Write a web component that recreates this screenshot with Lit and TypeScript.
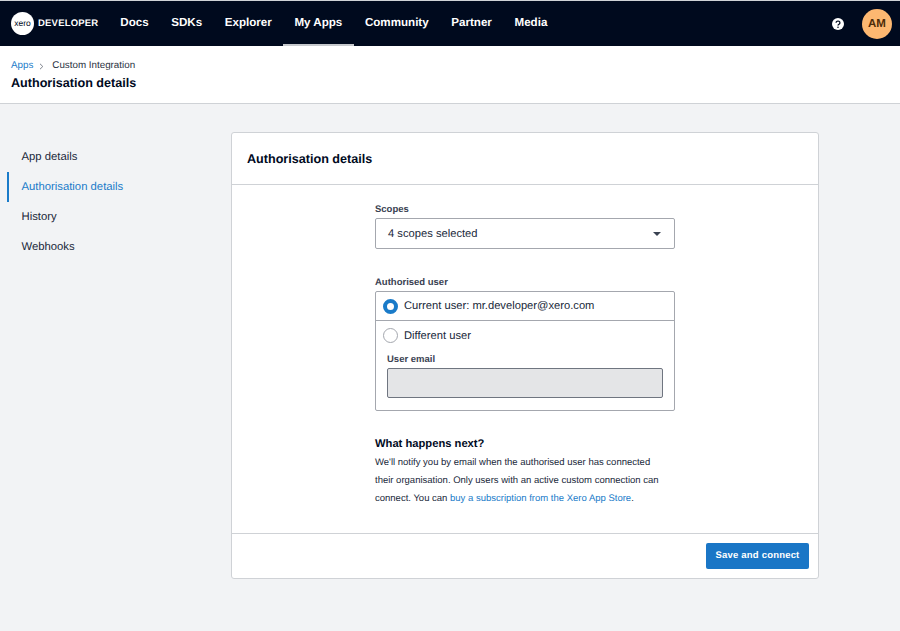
import { LitElement, html, css } from "lit";
import { customElement } from "lit/decorators.js";

@customElement("app-root")
export class AppRoot extends LitElement {
  static styles = css`
    :host {
      display: block;
      height: 631px;
      overflow: hidden;
      background: #f2f3f5;
      color: #000a1e;
      font-family: "Liberation Sans", Arial, sans-serif;
      text-rendering: geometricPrecision;
      -webkit-font-smoothing: antialiased;
    }
    a {
      color: #1a7bc9;
      text-decoration: none;
    }

    /* top nav */
    .nav {
      height: 45px;
      border-top: 1px solid #cfd2d6;
      background: #000a1e;
      display: flex;
      align-items: stretch;
      color: #fff;
    }
    .brand {
      display: flex;
      align-items: center;
      padding-left: 11px;
      width: 109px;
      box-sizing: border-box;
      flex-shrink: 0;
    }
    .logo {
      width: 23px;
      height: 23px;
      border-radius: 50%;
      background: #fff;
      color: #000a1e;
      font-size: 8.5px;
      line-height: 23px;
      text-align: center;
      margin-right: 4px;
    }
    .brand-name {
      font-size: 9.5px;
      font-weight: 700;
      letter-spacing: 0.2px;
    }
    .links {
      display: flex;
      flex: 1;
    }
    .link {
      display: flex;
      align-items: center;
      padding: 0 11.3px;
      font-size: 11.6px;
      font-weight: 700;
      border-bottom: 2px solid transparent;
      box-sizing: border-box;
    }
    .link.on {
      border-bottom-color: #c6c9cd;
    }
    .tools {
      display: flex;
      align-items: center;
      gap: 18px;
      padding-right: 8px;
    }
    .help {
      width: 12px;
      height: 12px;
      display: block;
    }
    .avatar {
      width: 30px;
      height: 30px;
      border-radius: 50%;
      background: #fdb871;
      color: #4d2c08;
      font-size: 11.5px;
      font-weight: 700;
      line-height: 30px;
      text-align: center;
    }

    /* page header */
    .head {
      height: 58px;
      box-sizing: border-box;
      background: #fff;
      border-bottom: 1px solid #cfd2d6;
      padding: 14px 11px 0;
    }
    .crumbs {
      display: flex;
      align-items: center;
      font-size: 9.8px;
      line-height: 12px;
      color: #2a3242;
    }
    .crumbs svg {
      width: 5px;
      height: 7px;
      margin: 0 8px 0 6px;
    }
    .head h1 {
      margin: 3px 0 0;
      font-size: 12.6px;
      line-height: 16px;
      font-weight: 700;
    }

    /* body */
    .main {
      display: flex;
      align-items: flex-start;
      padding: 28px 0 0 7px;
    }
    .side {
      width: 224px;
      flex-shrink: 0;
      padding-top: 10px;
    }
    .side div {
      height: 30px;
      line-height: 30px;
      font-size: 11.3px;
      padding-left: 12.5px;
      border-left: 2px solid transparent;
      color: #20283a;
    }
    .side div.on {
      color: #1a7bc9;
      border-left-color: #1a7bc9;
    }
    .card {
      width: 588px;
      height: 447px;
      box-sizing: border-box;
      background: #fff;
      border: 1px solid #cfd2d6;
      border-radius: 3px;
      display: flex;
      flex-direction: column;
    }
    .card-head {
      height: 52px;
      box-sizing: border-box;
      flex-shrink: 0;
      border-bottom: 1px solid #cfd2d6;
      padding-left: 15px;
      display: flex;
      align-items: center;
      font-size: 12.6px;
      font-weight: 700;
    }
    .form {
      flex: 1;
      width: 300px;
      margin-left: 143px;
      padding-top: 19px;
    }
    .label {
      font-size: 9.5px;
      line-height: 12px;
      font-weight: 700;
      color: #3a4252;
    }
    .select {
      margin-top: 2px;
      height: 31px;
      box-sizing: border-box;
      border: 1px solid #a4a7ae;
      border-radius: 2px;
      display: flex;
      align-items: center;
      justify-content: space-between;
      padding: 0 11px 0 12px;
      font-size: 11.2px;
      color: #20283a;
    }
    .caret {
      width: 0;
      height: 0;
      margin-right: 2px;
      border-left: 4px solid transparent;
      border-right: 4px solid transparent;
      border-top: 4px solid #3a4252;
    }
    .label.user {
      margin-top: 28px;
    }
    .choices {
      margin-top: 2px;
      border: 1px solid #a4a7ae;
      border-radius: 2px;
    }
    .choice {
      display: flex;
      align-items: center;
      height: 28px;
      padding-left: 7px;
      font-size: 11.2px;
      color: #20283a;
    }
    .choice.current {
      border-bottom: 1px solid #a4a7ae;
    }
    .choice.other {
      height: 29px;
    }
    .radio {
      width: 15px;
      height: 15px;
      box-sizing: border-box;
      border-radius: 50%;
      border: 1px solid #a4a7ae;
      margin-right: 6px;
      background: #fff;
    }
    .radio.on {
      border: 4.5px solid #1a7bc9;
    }
    .email {
      padding: 4px 11px 12px;
    }
    .email .box {
      margin-top: 2px;
      height: 30px;
      box-sizing: border-box;
      background: #e4e5e7;
      border: 1px solid #6f7580;
      border-radius: 2px;
    }
    .next {
      margin-top: 26px;
    }
    .next h2 {
      margin: 0;
      font-size: 11.2px;
      line-height: 14px;
      font-weight: 700;
    }
    .next p {
      margin: 3px 0 0;
      font-size: 9.5px;
      line-height: 18px;
      color: #20283a;
    }
    .foot {
      height: 45px;
      box-sizing: border-box;
      flex-shrink: 0;
      border-top: 1px solid #cfd2d6;
      display: flex;
      align-items: center;
      justify-content: flex-end;
      padding-right: 9px;
    }
    .btn {
      height: 26px;
      line-height: 26px;
      width: 103px;
      text-align: center;
      border-radius: 2px;
      background: #1a76c6;
      color: #fff;
      font-size: 9.5px;
      font-weight: 700;
      letter-spacing: 0.2px;
    }
  `;

  render() {
    const links = ["Docs", "SDKs", "Explorer", "My Apps", "Community", "Partner", "Media"];
    const side = ["App details", "Authorisation details", "History", "Webhooks"];
    return html`
      <div class="nav">
        <div class="brand">
          <div class="logo">xero</div>
          <div class="brand-name">DEVELOPER</div>
        </div>
        <div class="links">
          ${links.map((l) => html`<div class="link ${l === "My Apps" ? "on" : ""}">${l}</div>`)}
        </div>
        <div class="tools">
          <svg class="help" viewBox="0 0 12 12">
            <circle cx="6" cy="6" r="6" fill="#fff"></circle>
            <path d="M4.1 4.7a1.9 1.7 0 1 1 2.9 1.5c-.7.4-1 .7-1 1.3" fill="none" stroke="#000a1e" stroke-width="1.3"></path>
            <circle cx="6" cy="9.2" r=".8" fill="#000a1e"></circle>
          </svg>
          <div class="avatar">AM</div>
        </div>
      </div>
      <div class="head">
        <div class="crumbs">
          <a href="#">Apps</a>
          <svg viewBox="0 0 5 7"><path d="M1 .8 3.8 3.5 1 6.2" fill="none" stroke="#6f7580" stroke-width=".9"></path></svg>
          <span>Custom Integration</span>
        </div>
        <h1>Authorisation details</h1>
      </div>
      <div class="main">
        <div class="side">
          ${side.map((s) => html`<div class="${s === "Authorisation details" ? "on" : ""}">${s}</div>`)}
        </div>
        <div class="card">
          <div class="card-head">Authorisation details</div>
          <div class="form">
            <div class="label">Scopes</div>
            <div class="select"><span>4 scopes selected</span><span class="caret"></span></div>
            <div class="label user">Authorised user</div>
            <div class="choices">
              <div class="choice current"><span class="radio on"></span>Current user: mr.developer@xero.com</div>
              <div class="choice other"><span class="radio"></span>Different user</div>
              <div class="email">
                <div class="label">User email</div>
                <div class="box"></div>
              </div>
            </div>
            <div class="next">
              <h2>What happens next?</h2>
              <p>
                We'll notify you by email when the authorised user has connected<br />
                their organisation. Only users with an active custom connection can<br />
                connect. You can <a href="#">buy a subscription from the Xero App Store</a>.
              </p>
            </div>
          </div>
          <div class="foot"><div class="btn">Save and connect</div></div>
        </div>
      </div>
    `;
  }
}
